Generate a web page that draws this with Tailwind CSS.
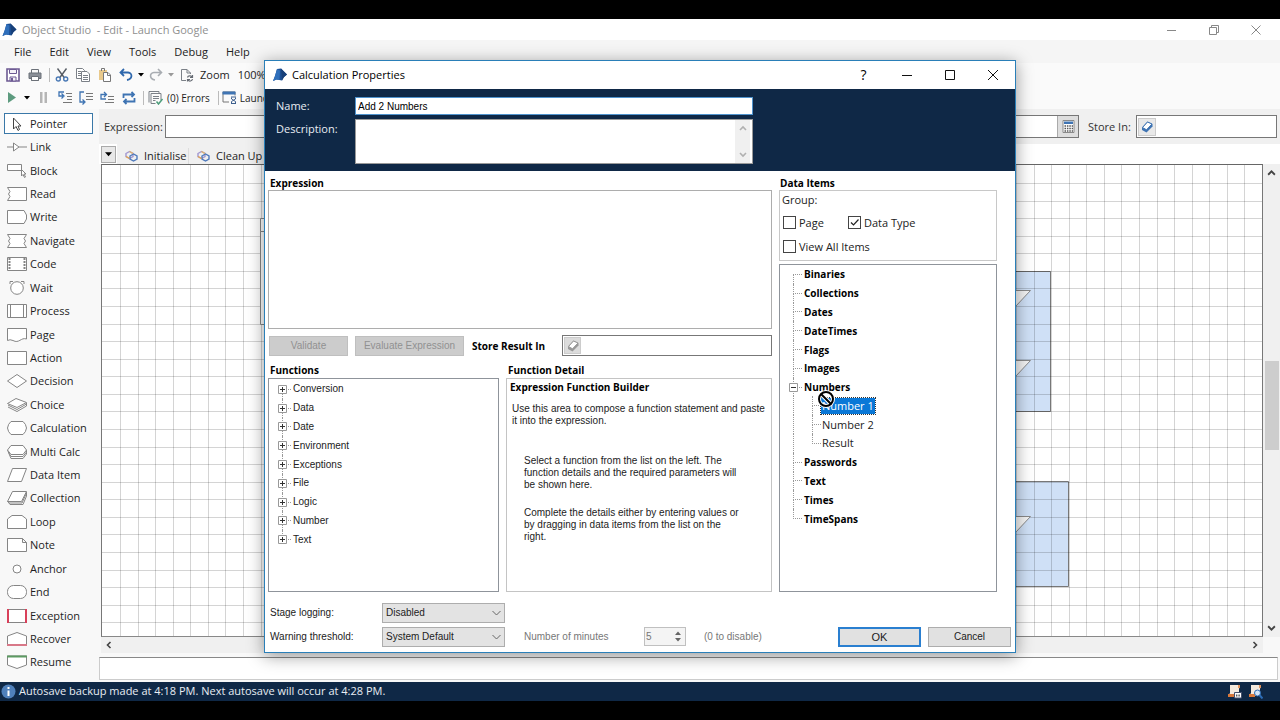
<!DOCTYPE html>
<html lang="en">
<head>
<meta charset="utf-8">
<title>Object Studio - Edit - Launch Google</title>
<script src="https://cdn.jsdelivr.net/npm/@tailwindcss/browser@4"></script>
</head>
<body class="bg-black">
<svg class="hidden">
  <defs>
    <symbol id="logo" viewBox="0 0 14 14"><path d="M4 1 L8 0.5 L14 6.5 L11 9 L9 12.5 L3.5 11.5 L0 13 L2 8 Z" fill="#1c4f93"/><path d="M4 1 L7 2.5 L6.500 12 L3.500 11.500 L0 13 L2 8 Z" fill="#2f6fbb"/><path d="M8 .5 L14 6.500 L11 9 L9 12.500 L8.500 6 Z" fill="#173f78"/></symbol>
    <symbol id="caret" viewBox="0 0 6 4"><path d="M0 0H6L3 3.500Z"/></symbol>
    <symbol id="tag" viewBox="0 0 14 14"><path d="M2 7.500 L7.500 1.500 L12.500 4 L12.500 6.500 L6.500 12.500 L2 10Z" fill="currentColor"/><path d="M2.500 7.500 L7.500 2 L12 4 L6.500 9.800Z" fill="#fff" stroke="currentColor"/></symbol>
    <symbol id="cubes" viewBox="0 0 13 12"><g fill="none" stroke-width="1.400"><path d="M1 3.500 L4.500 1.500 L8 3.500 L8 6.500 L4.500 8.500 L1 6.500Z" stroke="#a197d0"/><path d="M5 6 L8.500 4 L12 6 L12 9 L8.500 11 L5 9Z" stroke="#4f7abc"/><path d="M1 6.500 L4.500 8.500" stroke="#e6a54a"/><path d="M4.500 1.500 L8 3.500" stroke="#e2b36b"/></g></symbol>
    <symbol id="up" viewBox="0 0 8 6"><path d="M1 5 L4 2 L7 5" fill="none" stroke="currentColor" stroke-width="1.600"/></symbol>
    <symbol id="down" viewBox="0 0 8 6"><path d="M1 1 L4 4 L7 1" fill="none" stroke="currentColor" stroke-width="1.600"/></symbol>
  </defs>
</svg>

<div class="min-h-screen flex flex-col py-[19px] font-['Open_Sans','Noto_Sans',sans-serif] text-[11px] leading-4 text-[#1e1e1e]">
<div class="relative flex-1 flex flex-col bg-[#f8f8f8]">

  <header class="h-[21px] bg-white flex items-center pl-[2px] text-[#8f8f8f]">
    <svg class="w-[15px] h-[14px]"><use href="#logo"/></svg>
    <h1 class="ml-[5px] whitespace-pre">Object Studio  - Edit - Launch Google</h1>
    <div class="ml-auto flex pr-[3px]">
      <button aria-label="Minimise" class="w-[42px] h-5 grid place-items-center"><svg class="size-[10px]" viewBox="0 0 10 10"><path d="M0 5.500H9" stroke="#888"/></svg></button>
      <button aria-label="Restore" class="w-[42px] h-5 grid place-items-center"><svg class="size-[10px]" viewBox="0 0 10 10" fill="none" stroke="#888"><path d="M.5 2.500h7v7h-7zM2.500 2.500v-2h7v7h-2"/></svg></button>
      <button aria-label="Close" class="w-[42px] h-5 grid place-items-center"><svg class="size-[10px]" viewBox="0 0 10 10"><path d="M.5.5l9 9M9.500.5l-9 9" stroke="#888"/></svg></button>
    </div>
  </header>

  <nav class="h-[23px] flex items-center pl-[14px] gap-[18px] text-[#222] bg-[#f5f5f5]">
    <button>File</button><button>Edit</button><button>View</button><button>Tools</button><button>Debug</button><button>Help</button>
  </nav>

  <div class="h-[23px] flex items-center pl-[2px] bg-[#fafafa]" role="toolbar" aria-label="Standard">
    <button aria-label="Save" class="w-[22px] grid place-items-center"><svg class="size-[14px]" viewBox="0 0 14 14"><path d="M1 1H13V13H1Z" fill="#fff" stroke="#6d5a93" stroke-width="1.600"/><path d="M3.500 1.500H10.500V5.500H3.500ZM4 9H10V13H4Z" fill="#f4f2f8" stroke="#6d5a93"/><path d="M5 10H7V13H5Z" fill="#6d5a93"/></svg></button>
    <button aria-label="Print" class="w-[22px] grid place-items-center"><svg class="size-[14px]" viewBox="0 0 14 14" fill="none" stroke="#6b7078"><path d="M3.500 5V1.500H10.500V5M3.500 9.500V12.500H10.500V9.500"/><path d="M1 5H13V10.500H1Z" fill="#8b9098"/><path d="M3.500 8.500H10.500V12.500H3.500Z" fill="#fff"/></svg></button>
    <span class="w-[6px] h-[14px] flex justify-center"><span class="w-px bg-[#bbb]"></span></span>
    <button aria-label="Cut" class="w-[20px] grid place-items-center"><svg class="size-[14px]" viewBox="0 0 14 14" fill="none"><path d="M2.500.5L9.500 10M11.500.5L4.500 10" stroke="#555b63" stroke-width="1.400"/><circle cx="3.300" cy="11" r="2" stroke="#4a79b5" stroke-width="1.400"/><circle cx="10.700" cy="11" r="2" stroke="#4a79b5" stroke-width="1.400"/></svg></button>
    <button aria-label="Copy" class="w-[22px] grid place-items-center"><svg class="size-[14px]" viewBox="0 0 14 14" fill="#fff" stroke="#7b8087"><path d="M.5.5H6.500L8.500 2.500V10.500H.5Z"/><path d="M2 3.500H5M2 5.500H5M2 7.500H5"/><path d="M5.500 3.500H11L13.500 6V13.500H5.500Z"/><path d="M7 7.500H12M7 9.500H12M7 11.500H12"/></svg></button>
    <button aria-label="Paste" class="w-[22px] grid place-items-center"><svg class="size-[14px]" viewBox="0 0 14 14"><path d="M1 2H9V12H1Z" fill="#e9c98b"/><path d="M3.500 3V.5H6.500V3" fill="none" stroke="#777"/><path d="M5.500 4.500H10L12.500 7V13.500H5.500Z" fill="#fff" stroke="#777"/><path d="M9.500 5V7.500H12" fill="none" stroke="#777"/></svg></button>
    <button aria-label="Undo" class="w-[19px] grid place-items-center"><svg class="size-[14px]" viewBox="0 0 14 14" fill="none" stroke="#2f68ad" stroke-width="1.800"><path d="M5 1L1.500 4.500L5 8M2 4.500H9C14 5 13.500 11 8 12"/></svg></button>
    <button aria-label="Undo list" class="w-3 grid place-items-center"><svg class="w-[6px] h-1"><use href="#caret"/></svg></button>
    <button aria-label="Redo" class="w-[18px] grid place-items-center"><svg class="size-[14px]" viewBox="0 0 14 14" fill="none" stroke="#a9adb2" stroke-width="1.600"><path d="M9 1L12.500 4.500L9 8M12 4.500H5C0 5 .5 11 6 12"/></svg></button>
    <button aria-label="Redo list" class="w-3 grid place-items-center"><svg class="w-[6px] h-1 fill-[#999]"><use href="#caret"/></svg></button>
    <button aria-label="Refresh" class="w-5 grid place-items-center"><svg class="size-[14px]" viewBox="0 0 14 14" fill="none" stroke="#7b8087"><path d="M6 12.500H1.500V1.500H7L10.500 5V6M7 1.500V5H10.500"/><path d="M7.500 9.500C8 7.500 11 7.500 12 9M12.500 7V9.500H10M12.500 11C12 13.500 9 13.500 8 12M7.500 13.500V11.500H10" stroke="#666b73" stroke-width="1.200"/></svg></button>
    <label for="zoom" class="ml-[3px]">Zoom</label>
    <input id="zoom" value="100%" class="ml-2 w-[60px] bg-transparent">
  </div>

  <div class="h-[23px] flex items-center pl-[2px] text-[10px] bg-[#fafafa]" role="toolbar" aria-label="Debug">
    <button aria-label="Run" class="w-5 grid place-items-center"><svg class="w-2 h-[11px]" viewBox="0 0 8 11"><path d="M0 0L8 5.500L0 11Z" fill="#5d9b7f"/></svg></button>
    <button aria-label="Run options" class="w-[10px] grid place-items-center"><svg class="w-[6px] h-1"><use href="#caret"/></svg></button>
    <button aria-label="Pause" class="w-[22px] grid place-items-center"><svg class="w-[7px] h-[11px]" viewBox="0 0 7 11" fill="#b5b5b5"><path d="M0 0H2.500V11H0ZM4.500 0H7V11H4.500Z"/></svg></button>
    <button aria-label="Step in" class="w-[21px] grid place-items-center"><svg class="size-[14px]" viewBox="0 0 14 14" fill="none"><path d="M6 1H1V5H5M3.500 2.500L6 5L3.500 7.500" stroke="#3f74b3" stroke-width="1.300"/><path d="M8 2.500H14M9 5.500H14M9 8.500H14M5 11.500H14" stroke="#777"/></svg></button>
    <button aria-label="Step over" class="w-[21px] grid place-items-center"><svg class="size-[14px]" viewBox="0 0 14 14" fill="none"><path d="M5 1H1V11H5M3.500 8.500L6 11L3.500 13.500" stroke="#3f74b3" stroke-width="1.300"/><path d="M7 2.500H14M7 5.500H14M7 8.500H14" stroke="#777"/></svg></button>
    <button aria-label="Step out" class="w-[22px] grid place-items-center"><svg class="size-[14px]" viewBox="0 0 14 14" fill="none"><path d="M6 8H1V3.500H6M4 1L6.500 3.500L4 6" stroke="#3f74b3" stroke-width="1.300"/><path d="M8 5.500H14M8 8.500H14M5 11.500H14" stroke="#777"/></svg></button>
    <button aria-label="Reset" class="w-[22px] grid place-items-center"><svg class="size-[14px]" viewBox="0 0 14 14" fill="none" stroke="#3f74b3" stroke-width="1.800"><path d="M1.500 7V3.500H12M9.500 1L12 3.500L9.500 6M12.500 7V10.500H2M4.500 8L2 10.500L4.500 13"/></svg></button>
    <span class="w-[6px] h-[14px] flex justify-center"><span class="w-px bg-[#bbb]"></span></span>
    <button class="flex items-center gap-[3px]"><svg class="w-[16px] h-[14px] ml-[2px]" viewBox="0 0 15 14" fill="none" stroke="#7b8087"><path d="M.5 11.500V.5H10.500V2M2.500 2.500H12.500V9M2.500 2.500V12.500H7M4.500 5.500H10.500M4.500 7.500H10.500M4.500 9.500H7"/><path d="M8 10.500L10 13L14 8" stroke="#4d9d7b" stroke-width="1.500"/></svg>(0) Errors</button>
    <span class="ml-2 w-px h-[14px] bg-[#bbb]"></span>
    <button class="ml-[3px] flex items-center gap-[3px]"><svg class="size-[15px]" viewBox="0 0 15 14"><path d="M1 11.500V1.500H13V5M1 11.500H7" fill="none" stroke="#777"/><path d="M.5 1H13.500V4H.5Z" fill="#3f74b3"/><path d="M9 6.500H14M9 13H14M9.500 7V8.500L13.500 11V13M13.500 7V8.500L9.500 11V13" fill="none" stroke="#3d5f8d"/></svg>Launch</button>
  </div>

  <div class="flex-1 flex">
    <aside class="w-[99px] pt-[3px] pb-[8px] flex flex-col bg-[#f8f8f8]">
      <ul id="palette" class="flex-1 flex flex-col"></ul>
    </aside>

    <main class="flex-1 min-w-0 flex flex-col">
      <div class="h-[35px] bg-[#f0f0f0] flex items-center pl-[5px] pr-[3px]">
        <label for="expr" class="w-[61px] text-[#333]">Expression:</label>
        <div class="flex-1 h-[23px] flex bg-white border border-[#777]">
          <input id="expr" class="flex-1 min-w-0">
          <button aria-label="Calculator" class="w-[21px] border-l border-[#aaa] bg-[#dedede] grid place-items-center"><svg class="size-[13px]" viewBox="0 0 13 13"><path d="M1 .5H12V12.500H1Z" fill="#fff" stroke="#8a8a8a"/><path d="M2 1.500H11V4H2Z" fill="#3f74b3"/><path d="M2.500 6H11M2.500 8.500H11M2.500 11H11" stroke="#555" stroke-width="1.500" stroke-dasharray="1.500 .9"/></svg></button>
        </div>
        <label for="store" class="ml-[9px] w-[48px] text-[#333]">Store In:</label>
        <div class="w-[141px] h-[23px] flex items-center gap-1 bg-white border border-[#777] pl-[1px]">
          <button aria-label="Pick data item" class="size-[18px] grid place-items-center bg-[#e9e9e9] border border-[#ccc] text-[#3f74b3]"><svg class="size-[14px]"><use href="#tag"/></svg></button>
          <input id="store" class="flex-1 min-w-0">
        </div>
      </div>
      <div class="h-5 bg-white flex items-center">
        <button aria-label="Page list" class="ml-[2px] mr-[1px] w-[15px] h-[17px] border border-[#aaa] bg-[#e8e8e8] grid place-items-center"><svg class="w-[7px] h-[5px]"><use href="#caret"/></svg></button>
        <div class="h-5 flex items-center bg-[#f0f0f0] pt-[3px]">
          <button class="w-[72px] pl-2 flex items-center gap-[6px] border-r border-[#ddd]"><svg class="w-[13px] h-3"><use href="#cubes"/></svg>Initialise</button>
          <button class="w-[84px] pl-2 flex items-center gap-[6px] whitespace-nowrap"><svg class="w-[13px] h-3"><use href="#cubes"/></svg>Clean Up</button>
        </div>
      </div>
      <div class="flex-1 flex pl-[2px]">
        <div class="flex-1 min-w-0 flex border border-t-[#666] border-r-[#777] border-b-[#888] border-l-[#777] bg-white">
          <svg id="canvas" class="flex-1 w-0" aria-label="Flow diagram"></svg>
        </div>
        <div class="w-[17px] flex flex-col items-center justify-between bg-[#f0f0f0] text-[#444] py-[5px]">
          <svg class="w-[9px] h-[7px]"><use href="#up"/></svg>
          <span class="w-[14px] h-[89px] mt-[10px] bg-[#cdcdcd]"></span>
          <svg class="w-[9px] h-[7px]"><use href="#down"/></svg>
        </div>
      </div>
      <div class="h-[16px] ml-[2px] mr-[17px] bg-[#f0f0f0] flex items-center justify-between px-1 text-[#444]">
        <svg class="w-[7px] h-2" viewBox="0 0 6 8"><path d="M5 1L2 4L5 7" fill="none" stroke="currentColor" stroke-width="1.600"/></svg>
        <svg class="w-[7px] h-2" viewBox="0 0 6 8"><path d="M1 1L4 4L1 7" fill="none" stroke="currentColor" stroke-width="1.600"/></svg>
      </div>
      <div class="mt-1 h-[23px] mr-[2px] border border-t-[#888] border-[#ccc] bg-white"></div>
      <div class="h-[2px]"></div>
    </main>
  </div>

  <footer class="h-[19px] pb-px bg-[#0f2846] text-[#e8edf3] flex items-center pl-[1px] pr-[17px]">
    <svg class="size-[15px]" viewBox="0 0 15 15"><circle cx="7.500" cy="7.500" r="7" fill="#4f80bb"/><path d="M7.500 6.500V12M7.500 3V5" stroke="#fff" stroke-width="2"/></svg>
    <p class="ml-[3px]">Autosave backup made at 4:18 PM. Next autosave will occur at 4:28 PM.</p>
    <svg class="ml-auto size-[15px]" viewBox="0 0 15 15"><path d="M3 1H13L12 5V12H1L3 9Z" fill="#f4e9dd"/><path d="M1 10H7V13H1Z" fill="#d9783a"/><path d="M11 1H13V4H11Z" fill="#e0925c"/><path d="M7.500 8.500H14.500V14H7.500Z" fill="#fff" stroke="#444f6b"/><path d="M9 11.500H13" stroke="#555" stroke-width="2" stroke-dasharray="1 .6"/></svg>
    <svg class="ml-[6px] size-[15px]" viewBox="0 0 15 15"><path d="M3 1H13L12 5V12H1L3 9Z" fill="#f4e9dd"/><path d="M1 10H7V13H1Z" fill="#d9783a"/><path d="M11 1H13V4H11Z" fill="#e0925c"/><circle cx="9.500" cy="9" r="3" fill="#cfe4fa" stroke="#2c6cb5"/><path d="M11.500 11L14.500 14.500" stroke="#2c6cb5" stroke-width="2"/></svg>
  </footer>

  <div role="dialog" aria-labelledby="dlg" class="absolute inset-x-0 top-[41px] mx-auto w-[752px] border border-[#2a7fb8] bg-white shadow-[0_3px_16px_rgba(0,0,0,0.4)] text-black">
    <div class="h-7 flex items-center pl-2">
      <svg class="size-[14px]"><use href="#logo"/></svg>
      <h2 id="dlg" class="ml-[5px]">Calculation Properties</h2>
      <div class="ml-auto flex pr-px">
        <button aria-label="Help" class="w-[43px] text-sm">?</button>
        <button aria-label="Minimise" class="w-[43px] grid place-items-center"><svg class="size-[10px]" viewBox="0 0 10 10"><path d="M0 5.500H10" stroke="#111"/></svg></button>
        <button aria-label="Maximise" class="w-[43px] grid place-items-center"><svg class="size-[10px]" viewBox="0 0 10 10"><path d="M.5.5h9v9h-9z" fill="none" stroke="#111"/></svg></button>
        <button aria-label="Close" class="w-[43px] grid place-items-center"><svg class="size-[10px]" viewBox="0 0 10 10"><path d="M0 0l10 10M10 0L0 10" stroke="#111"/></svg></button>
      </div>
    </div>

    <div class="bg-[#0f2846] pt-2 pb-[7px] pl-[11px] text-[#e8edf3] flex flex-col gap-1">
      <div class="flex"><label for="nm" class="w-[79px] leading-[18px]">Name:</label>
        <input id="nm" value="Add 2 Numbers" class="w-[398px] h-[18px] bg-white border border-[#4f93cd] px-[2px] text-black text-[10px] font-['Liberation_Sans',sans-serif]"></div>
      <div class="flex"><label for="ds" class="w-[79px] leading-5">Description:</label>
        <div class="w-[398px] h-[45px] bg-white border border-[#999] flex">
          <textarea id="ds" class="flex-1 resize-none overflow-hidden text-black"></textarea>
          <div class="w-[15px] mr-[2px] bg-[#f0f0f0] text-[#b0b0b0] flex flex-col items-center justify-between py-[5px]"><svg class="w-2 h-[6px]"><use href="#up"/></svg><svg class="w-2 h-[6px]"><use href="#down"/></svg></div>
        </div></div>
    </div>

    <div class="flex gap-[7px] pl-[3px] pr-[18px] pt-[6px]">
      <section class="flex-1 flex flex-col">
        <label for="ex" class="pl-[2px] h-[13px] text-[10px] leading-[13px] font-bold">Expression</label>
        <textarea id="ex" class="block h-[139px] border border-[#adadad] resize-none"></textarea>
        <div class="mt-[6px] h-[21px] flex items-center text-[10px] font-['Liberation_Sans',sans-serif]">
          <button disabled class="ml-[1px] w-[79px] h-5 bg-[#cccccc] border border-[#bfbfbf] text-[#919191] leading-[18px]">Validate</button>
          <button disabled class="ml-[7px] w-[109px] h-5 bg-[#cccccc] border border-[#bfbfbf] text-[#919191] leading-[18px] whitespace-nowrap">Evaluate Expression</button>
          <label for="sr" class="ml-2 w-[90px] font-['Open_Sans','Noto_Sans',sans-serif] font-bold">Store Result In</label>
          <div class="flex-1 h-[21px] border border-[#777] flex items-center pl-[1px] gap-1">
            <button aria-label="Pick data item" class="size-[17px] grid place-items-center bg-[#dcdcdc] border border-[#ccc] text-[#999]"><svg class="size-[14px]"><use href="#tag"/></svg></button>
            <input id="sr" class="flex-1 min-w-0">
          </div>
        </div>
        <div class="mt-[8px] flex-1 flex gap-[7px]">
          <div class="w-[231px] flex flex-col">
            <h3 class="pl-[2px] h-[14px] text-[10px] leading-[13px] font-bold">Functions</h3>
            <div class="flex-1 border border-[#8f949b] pt-[1px] pl-[9px]"><ul id="functions" class="h-[169px] flex flex-col text-[10px] font-['Liberation_Sans',sans-serif] text-[#222]"></ul></div>
          </div>
          <div class="flex-1 flex flex-col">
            <h3 class="pl-[2px] h-[14px] text-[10px] leading-[13px] font-bold">Function Detail</h3>
            <div class="flex-1 border border-[#c4c4c4] pl-[3px] text-[10px]">
              <h4 class="font-bold">Expression Function Builder</h4>
              <div class="font-['Liberation_Sans',sans-serif] text-[#222] leading-3">
                <p class="mt-2 ml-[2px]">Use this area to compose a function statement and paste<br>it into the expression.</p>
                <p class="mt-7 ml-[14px]">Select a function from the list on the left. The<br>function details and the required parameters will<br>be shown here.</p>
                <p class="mt-4 ml-[14px]">Complete the details either by entering values or<br>by dragging in data items from the list on the<br>right.</p>
              </div>
            </div>
          </div>
        </div>
      </section>

      <section class="w-[218px] flex flex-col">
        <h3 class="pl-[1px] h-[13px] text-[10px] leading-[13px] font-bold">Data Items</h3>
        <fieldset class="h-[71px] border border-[#c8c8c8] pl-[2px] text-[#222]">
          <p class="h-[18px] leading-[18px]">Group:</p>
          <div class="mt-[6px] flex items-center pl-[1px] h-[15px]">
            <label class="flex items-center gap-[3px] w-[65px]"><input type="checkbox" class="appearance-none size-[13px] bg-white border border-[#444]">Page</label>
            <label class="flex items-center gap-[3px]"><span class="grid"><input type="checkbox" checked class="[grid-area:1/1] appearance-none size-[13px] bg-white border border-[#444]"><svg class="[grid-area:1/1] size-[13px] pointer-events-none" viewBox="0 0 13 13"><path d="M3 6.500L5.500 9L10.500 3.500" fill="none" stroke="#222" stroke-width="1.200"/></svg></span>Data Type</label>
          </div>
          <div class="mt-[9px] flex items-center pl-[1px] h-[15px]">
            <label class="flex items-center gap-[3px]"><input type="checkbox" class="appearance-none size-[13px] bg-white border border-[#444]">View All Items</label>
          </div>
        </fieldset>
        <div class="mt-[3px] h-[328px] border border-[#8f949b] pl-[9px]"><ul id="items" class="h-[263px] flex flex-col"></ul></div>
      </section>
    </div>

    <div class="pt-[10px] pb-[5px] pl-[5px] pr-[4px] flex flex-col gap-[3px] text-[10px] font-['Liberation_Sans',sans-serif] text-[#222]">
      <div class="flex items-center h-[21px]">
        <label for="lg" class="w-[112px]">Stage logging:</label>
        <div class="grid items-center"><select id="lg" class="[grid-area:1/1] appearance-none w-[123px] h-5 bg-[#e3e3e3] border border-[#adadad] pl-[3px]"><option>Disabled</option></select><svg class="[grid-area:1/1] justify-self-end mr-1 w-[9px] h-[6px] pointer-events-none" viewBox="0 0 9 6"><path d="M.5 1L4.500 5L8.500 1" fill="none" stroke="#666"/></svg></div>
      </div>
      <div class="flex items-center h-[21px]">
        <label for="wt" class="w-[112px]">Warning threshold:</label>
        <div class="grid items-center"><select id="wt" class="[grid-area:1/1] appearance-none w-[123px] h-5 bg-[#e3e3e3] border border-[#adadad] pl-[3px]"><option>System Default</option></select><svg class="[grid-area:1/1] justify-self-end mr-1 w-[9px] h-[6px] pointer-events-none" viewBox="0 0 9 6"><path d="M.5 1L4.500 5L8.500 1" fill="none" stroke="#666"/></svg></div>
        <label for="mn" class="ml-[19px] w-[120px] text-[#777]">Number of minutes</label>
        <div class="w-[42px] h-[19px] border border-[#c0c0c0] bg-[#f4f4f4] flex"><input id="mn" value="5" disabled class="flex-1 min-w-0 pl-[1px] text-[#777]"><div class="w-[14px] flex flex-col items-center justify-evenly"><svg class="w-[6px] h-1 rotate-180 fill-[#666]"><use href="#caret"/></svg><svg class="w-[6px] h-1 fill-[#666]"><use href="#caret"/></svg></div></div>
        <span class="ml-[18px] text-[#777]">(0 to disable)</span>
        <button class="ml-auto w-[83px] h-5 bg-[#e1e1e1] border-2 border-[#2a7fd0] leading-4 text-[11px]">OK</button>
        <button class="ml-[7px] w-[83px] h-5 bg-[#e1e1e1] border border-[#adadad] leading-[18px]">Cancel</button>
      </div>
    </div>
  </div>
</div>
</div>

<script>
const box = '<path d="M.5.5H19.500V13.500H.5Z"/>';
const stages = [
  ['Pointer', '<path d="M6.500 1V12L9 9.500L11 13.500L12.500 12.500L11 9H14Z" stroke="#444"/>'],
  ['Link', '<path d="M0 7H6M12 7H20M6.500 3V11L12 7Z"/>'],
  ['Block', '<path d="M.5.5H14.500V6.500H.5Z"/><path d="M14.500 5.500V12L16 10.500L17.500 13.500L18.500 13L17 10H19Z"/>'],
  ['Read', '<path d="M.5.5H19.500V13.500H.5L3 9.500L1.500 7L3 4.500Z"/>'],
  ['Write', '<path d="M.5.5H17L19.500 5V9L17 13.500H.5Z"/>'],
  ['Navigate', '<path d="M.5.5H19.500L17 4.500L18.500 7L17 9.500L19.500 13.500H.5L3 9.500L1.500 7L3 4.500Z"/>'],
  ['Code', '<path d="M.5.5H19.500V13.500H.5Z"/><path d="M2.500 1V13M17.500 1V13" stroke-width="2" stroke-dasharray="2 1"/>'],
  ['Wait', '<circle cx="10" cy="7" r="6.300"/><path d="M3 3V.5H6M17 3V.5H14"/>'],
  ['Process', box + '<path d="M3.500 1V13M16.500 1V13"/>'],
  ['Page', '<path d="M.5.5H19.500V11C14 9 12 16 6 12.500Q3 11 .5 12.500Z"/>'],
  ['Action', box],
  ['Decision', '<path d="M.5 7L10 .5L19.500 7L10 13.500Z"/>'],
  ['Choice', '<path d="M1 9L10 13.500L19.500 8V5"/><path d="M1 7L10 11.500L19.500 6"/><path d="M.5 5.500L9 .5L19.500 4.500L10 9.500Z"/>'],
  ['Calculation', '<path d="M4 .5H16Q19 3 19.500 7Q19 11 16 13.500H4Q1 11 .5 7Q1 3 4 .5Z"/>'],
  ['Multi Calc', '<path d="M.5 5L4 13.500H16L19.500 9V5"/><path d="M2 8L4 11.500H16L19.500 7"/><path d="M4 .5H16L19.500 5L16 9.500H4L.5 5Z"/>'],
  ['Data Item', '<path d="M5.500.5H19.500L14.500 13.500H.5Z"/>'],
  ['Collection', '<path d="M.5 10L3 13.500H16L19.500 5V1"/><path d="M2 12H15L19 3"/><path d="M5.500.5H19.500L14.500 10.500H.5Z"/>'],
  ['Loop', '<path d="M.5 13.500V4L5 .5H15L19.500 4V13.500Z"/>'],
  ['Note', '<path d="M.5.5H15.500L19.500 4.500V13.500H.5ZM15.500.5V4.500H19.500"/>'],
  ['Anchor', '<circle cx="10" cy="7" r="4"/>'],
  ['End', '<rect x=".5" y=".5" width="19" height="13" rx="6"/>'],
  ['Exception', box + '<path d="M1 0V14M19 0V14" stroke="#d9405a" stroke-width="2"/>'],
  ['Recover', '<path d="M.5 13V4L10 .5L19.500 4V13Z"/><path d="M0 13H20" stroke="#d87888" stroke-width="2"/>'],
  ['Resume', '<path d="M.5 1V10L10 13.500L19.500 10V1Z"/><path d="M0 1.500H20" stroke="#5c9a62" stroke-width="2"/>'],
];
document.getElementById('palette').innerHTML = stages.map(([name, shape], i) =>
  `<li class="flex-1 flex pl-1 pr-[6px]"><button class="flex-1 my-px flex items-center gap-[3px] pl-[2px] whitespace-nowrap border ${i ? 'border-transparent' : 'border-[#3a78a8] bg-white'}"><svg class="w-5 h-[14px] shrink-0" viewBox="0 0 20 14" fill="#fff" stroke="#858585">${shape}</svg>${name}</button></li>`).join('');

/* Connector column of a tree row: a tick at mid height and the trunk above and below it. */
const trunk = (first, last) =>
  `<span class="w-[9px] self-stretch flex flex-col"><span class="flex-1 border-b border-dotted border-[#999] ${first ? '' : 'border-l'}"></span><span class="flex-1 border-dotted border-[#999] ${last ? '' : 'border-l'}"></span></span>`;
const expander = sign =>
  `<svg class="w-[9px] h-[9px] shrink-0" viewBox="0 0 9 9"><path d="M.5.5H8.500V8.500H.5Z" fill="#fff" stroke="#999"/><path d="M2 4.500H7${sign === '+' ? 'M4.500 2V7' : ''}" stroke="#333"/></svg>`;

const fns = ['Conversion', 'Data', 'Date', 'Environment', 'Exceptions', 'File', 'Logic', 'Number', 'Text'];
document.getElementById('functions').innerHTML = fns.map((n, i) =>
  `<li class="relative flex-1 flex items-center"><span class="w-1"></span>${trunk(i === 0, i === fns.length - 1)}<span class="absolute left-0">${expander('+')}</span><span class="ml-[2px]">${n}</span></li>`).join('');

const items = ['Binaries', 'Collections', 'Dates', 'DateTimes', 'Flags', 'Images', 'Numbers', '>Number 1', '>Number 2', '>Result', 'Passwords', 'Text', 'Times', 'TimeSpans'];
const noDrop = '<svg class="absolute left-[28px] -top-[6px] size-[18px]" viewBox="0 0 18 18" fill="none"><circle cx="9" cy="9" r="7" stroke="#fff" stroke-width="4"/><path d="M4 4L14 14" stroke="#fff" stroke-width="4"/><circle cx="9" cy="9" r="7" stroke="#000" stroke-width="2"/><path d="M4 4L14 14" stroke="#000" stroke-width="2"/></svg>';
document.getElementById('items').innerHTML = items.map((n, i) => {
  if (n[0] === '>') {
    const name = n.slice(1), sel = name === 'Number 1';
    return `<li class="relative flex-1 flex items-center text-[#222]"><span class="w-1"></span><span class="w-[19px] self-stretch border-l border-dotted border-[#999]"></span>${trunk(false, name === 'Result')}<span class="px-[1px] ${sel ? 'bg-[#0a78d7] text-white outline outline-dotted outline-[#333]' : ''}">${name}</span>${sel ? noDrop : ''}</li>`;
  }
  return `<li class="relative flex-1 flex items-center text-[10px] font-bold"><span class="w-1"></span>${trunk(i === 0, i === items.length - 1)}${n === 'Numbers' ? `<span class="absolute left-0">${expander('-')}</span>` : ''}<span class="ml-[2px]">${n}</span></li>`;
}).join('');

/* Canvas: grouped blocks and data items, with the grid over them. */
const step = 17.57;
let art = '<g fill="#cfe0f6" stroke="#777"><path d="M600.5 106.500H948.500V246.500H600.500ZM600.500 316.500H966.500V421.500H600.500Z"/></g>';
for (let i = 0; i < 120; i++) {
  const p = Math.round(18 + i * step) + .5;
  art += `<path d="M${p} 0V2000M0 ${p}H4000" stroke="#000" stroke-opacity=".17"/>`;
}
art += '<g fill="#f4f4f4" stroke="#888"><path d="M880 125.500H928.500L913.500 141.500H870ZM880 195.500H928.500L913.500 211.500H870ZM880 351.500H928.500L913.500 367.500H870Z"/><path d="M158.500 53.500H300V66.500H158.500ZM158.500 66.500H300V159.500H158.500Z" fill="#fff"/></g>';
document.getElementById('canvas').innerHTML = art;
</script>
</body>
</html>
